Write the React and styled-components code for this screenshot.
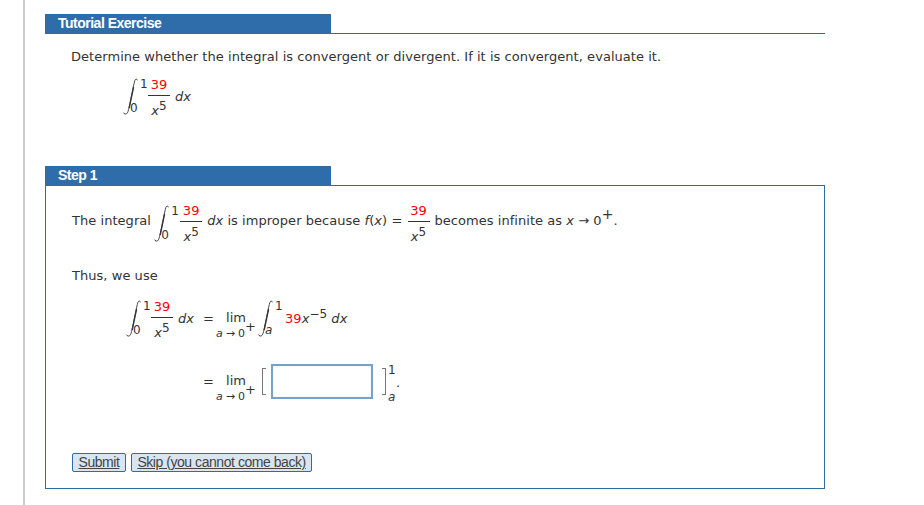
import styled, { createGlobalStyle } from "styled-components";

const Global = createGlobalStyle`
  html, body {
    margin: 0;
    background: #fff;
    color: #333;
    font-family: "DejaVu Sans", Verdana, sans-serif;
    font-size: 13px;
    letter-spacing: 0.045px;
  }
`;

const Page = styled.div`
  margin-left: 23px;
  height: 505px;
  overflow: hidden;
  box-sizing: border-box;
  border-left: 2px solid #ccc;
  padding: 14px 0 0 20px;
`;

const Panel = styled.section`
  width: 780px;
`;

const Header = styled.header`
  border-bottom: 1px solid #2d6ca8;
`;

const HeaderTitle = styled.h2`
  box-sizing: border-box;
  width: 286px;
  height: 19px;
  margin: 0;
  padding-left: 13px;
  background: #2e6da9;
  color: #fff;
  font: bold 14px/19px "Liberation Sans", Arial, sans-serif;
  letter-spacing: -0.5px;
`;

const Body = styled.div`
  box-sizing: border-box;
  height: ${(p) => p.$height}px;
  padding: ${(p) => p.$top}px 0 0 26px;
  border: ${(p) => (p.$boxed ? "1px solid #2d6ca8" : "none")};
  border-top: none;
`;

const Text = styled.p`
  margin: ${(p) => p.$top || 0}px 0 0;
  line-height: 16px;
`;

const MathRow = styled.div`
  display: flex;
  align-items: center;
  height: 44px;
  margin: ${(p) => p.$top || 0}px 0 0 ${(p) => p.$left || 0}px;
  white-space: pre;
`;

const IntegralWrap = styled.span`
  display: inline-flex;
  height: 37px;
  margin: ${(p) => p.$margin || "0"};
`;

const IntegralSign = styled.svg`
  width: 15px;
  height: 37px;
  fill: none;
  stroke: #333;
`;

const Limits = styled.span`
  display: inline-flex;
  flex-direction: column;
  justify-content: space-between;
  width: 10px;
  font-size: 12px;
  line-height: 14px;
`;

const Upper = styled.span`
  margin-left: 2px;
  margin-top: -1px;
`;

const Lower = styled.span`
  margin-left: -8px;
`;

const Frac = styled.span`
  display: inline-flex;
  flex-direction: column;
  align-items: center;
  width: 22px;
  margin: ${(p) => p.$margin};
`;

const Num = styled.span`
  width: 100%;
  text-align: center;
  color: #f00;
  line-height: 16px;
  padding: 5px 0 2px;
  border-bottom: 1px solid #333;
`;

const Den = styled.span`
  padding-top: 6px;
  line-height: 18px;
  white-space: nowrap;
`;

const Var = styled.i`
  font-style: oblique;
`;

const Red = styled.span`
  color: #f00;
`;

const Sup = styled.sup`
  font-size: ${(p) => p.$size || 12}px;
  line-height: 0;
  vertical-align: ${(p) => p.$raise || 5}px;
`;

const Steps = styled.div`
  display: grid;
  grid-template-columns: 77px 15px auto;
  row-gap: 13px;
  align-items: center;
  justify-content: start;
  margin: 12px 0 0 54px;
  white-space: pre;
`;

const RightSide = styled.div`
  display: flex;
  align-items: center;
  height: ${(p) => p.$height}px;
`;

const LimitOp = styled.span`
  display: inline-flex;
  flex-direction: column;
  align-items: center;
  width: 36px;
  margin-top: 16px;
  line-height: 16px;
`;

const LimitSub = styled.span`
  font-size: 11px;
  line-height: 16px;
  white-space: nowrap;
`;

const Arrow = styled.span`
  margin: 0 3px;
`;

const Bracket = styled.span`
  box-sizing: border-box;
  width: 4px;
  height: 27px;
  margin: ${(p) => p.$margin};
  border: 1px solid #777;
  border-${(p) => (p.$close ? "left" : "right")}: none;
`;

const Answer = styled.input`
  box-sizing: border-box;
  width: 102px;
  height: 35px;
  border: 2px solid #76a2c9;
  background: #fff;
  box-shadow: inset 0 0 2px #d7e5f1;
  outline: none;
`;

const Bounds = styled.span`
  display: inline-flex;
  flex-direction: column;
  justify-content: space-between;
  width: 8px;
  height: 41px;
  margin-top: 4px;
  font-size: 12px;
  line-height: 14px;
`;

const Period = styled.span`
  margin-top: 2px;
`;

const Actions = styled.div`
  display: flex;
  gap: 5px;
  margin-top: 44px;
`;

const Button = styled.button`
  height: 19px;
  padding: 0 5.5px;
  border: 1px solid #2d6ca8;
  border-radius: 2px;
  background: #d9e5f0;
  color: #444;
  font: 14px/17px "Liberation Sans", Arial, sans-serif;
  letter-spacing: -0.45px;
  text-decoration: underline;
`;

const Integral = ({ upper, lower, margin }) => (
  <IntegralWrap $margin={margin}>
    <IntegralSign viewBox="0 0 15 37">
      <path d="M14.8 2.4 C14 .8 12.6 .6 11.9 2.4 C10.8 5.2 6 31 5 33.5 C4.4 35.6 3 36.4 2 36 C1.2 35.8 .6 35.2 .4 34.6" strokeWidth=".9" />
      <path d="M10.6 9 L6.2 30" strokeWidth="1.3" />
    </IntegralSign>
    <Limits>
      <Upper>{upper}</Upper>
      <Lower>{lower}</Lower>
    </Limits>
  </IntegralWrap>
);

const Fraction = ({ margin = "0 5px 0 0" }) => (
  <Frac $margin={margin}>
    <Num>39</Num>
    <Den>
      <Var>x</Var>
      <Sup>5</Sup>
    </Den>
  </Frac>
);

const Limit = () => (
  <LimitOp>
    lim
    <LimitSub>
      <Var>a</Var>
      <Arrow>→</Arrow>0<Sup $size={13} $raise={6}>+</Sup>
    </LimitSub>
  </LimitOp>
);

const App = () => (
  <>
    <Global />
    <Page>
      <Panel>
        <Header>
          <HeaderTitle>Tutorial Exercise</HeaderTitle>
        </Header>
        <Body $height={132} $top={15}>
          <Text>Determine whether the integral is convergent or divergent. If it is convergent, evaluate it.</Text>
          <MathRow $top={9} $left={52}>
            <Integral upper="1" lower="0" />
            <Fraction />
            <Var>dx</Var>
          </MathRow>
        </Body>
      </Panel>
      <Panel>
        <Header>
          <HeaderTitle>Step 1</HeaderTitle>
        </Header>
        <Body $boxed $height={303} $top={12}>
          <MathRow>
            The integral{" "}
            <Integral upper="1" lower="0" margin="6px 0 0 -1px" />
            <Fraction margin="3px 5px 0 1px" />
            <span>
              <Var>dx</Var> is improper because <Var>f</Var>(<Var>x</Var>) ={" "}
            </span>
            <Fraction margin="3px 5px 0 1px" />
            <span>
              becomes infinite as <Var>x</Var> → 0<Sup $size={14} $raise={6}>+</Sup>.
            </span>
          </MathRow>
          <Text $top={26}>Thus, we use</Text>
          <Steps>
            <MathRow>
              <Integral upper="1" lower="0" />
              <Fraction />
              <Var>dx</Var>
            </MathRow>
            <span>=</span>
            <RightSide $height={44}>
              <Limit />
              <Integral upper="1" lower={<Var>a</Var>} margin="0 2px 0 4px" />
              <span>
                <Red>39</Red>
                <Var>x</Var>
                <Sup>−5</Sup> <Var>dx</Var>
              </span>
            </RightSide>
            <span />
            <span>=</span>
            <RightSide $height={56}>
              <Limit />
              <Bracket $margin="0 5px 0 8px" />
              <Answer aria-label="answer" />
              <Bracket $close $margin="0 2px 0 9px" />
              <Bounds>
                <span>1</span>
                <Var>a</Var>
              </Bounds>
              <Period>.</Period>
            </RightSide>
          </Steps>
          <Actions>
            <Button>Submit</Button>
            <Button>Skip (you cannot come back)</Button>
          </Actions>
        </Body>
      </Panel>
    </Page>
  </>
);

export default App;
